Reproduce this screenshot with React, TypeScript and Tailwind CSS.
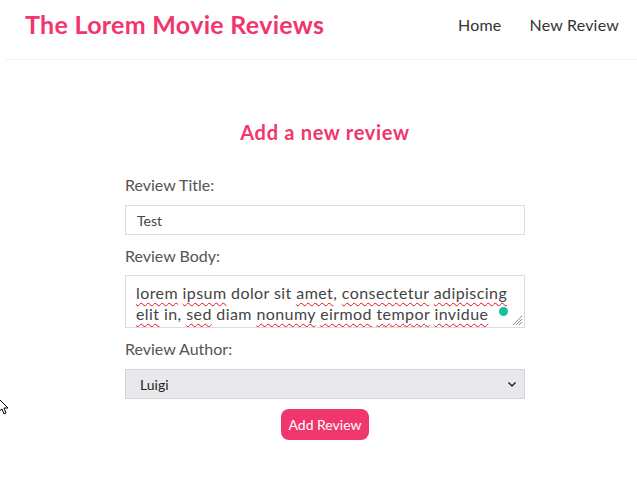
import React from "react";

const Wavy = ({ children }: { children: React.ReactNode }) => (
  <span className="underline decoration-wavy decoration-[#e5121b] decoration-1 underline-offset-[3px]">{children}</span>
);

export default function App() {
  return (
    <div className="relative w-[650px] h-[479px] bg-white overflow-hidden text-[#333]" style={{ fontFamily: "Lato, 'Open Sans', sans-serif" }}>
      <nav className="ml-[5px] w-[640px] h-[60px] px-5 border-b border-[#f2f2f2]">
        <div className="h-[49px] flex items-center justify-between">
          <h1 className="text-[25px] font-bold text-[#f1356d] leading-none tracking-[0.3px]">The Lorem Movie Reviews</h1>
          <div className="flex items-center text-[16px] text-[#333] tracking-[0.2px]">
            <span className="ml-4 p-[6px]">Home</span>
            <span className="ml-4 p-[6px]">New Review</span>
          </div>
        </div>
      </nav>
      <div className="w-[400px] mx-auto mt-[60px] flex flex-col">
        <h2 className="text-center text-[20px] font-bold text-[#f1356d] leading-[24px] tracking-[0.7px]">Add a new review</h2>
        <label className="mt-[30px] text-[16px] leading-[21px] text-[#555]">Review Title:</label>
        <div className="mt-[10px] h-[30px] border border-[#ddd] px-[11px] flex items-center text-[14px] text-[#444]">Test</div>
        <label className="mt-[10px] text-[16px] leading-[21px] text-[#555]">Review Body:</label>
        <div className="relative mt-[9px] h-[53px] border border-[#ddd] overflow-hidden">
          <div className="pl-[10px] pt-[6px] text-[16px] leading-[21px] text-[#444] pr-[14px] tracking-[0.42px]">
            <Wavy>lorem</Wavy> <Wavy>ipsum</Wavy> dolor sit <Wavy>amet</Wavy>, <Wavy>consectetur</Wavy> <Wavy>adipiscing</Wavy>{" "}
            <Wavy>elit</Wavy> in, <Wavy>sed</Wavy> diam <Wavy>nonumy</Wavy> <Wavy>eirmod</Wavy> <Wavy>tempor</Wavy> <Wavy>invidue</Wavy>
            <br />
            ut labore et dolore magna <Wavy>aliquyam</Wavy> erat, sed diam
          </div>
          <div className="absolute right-[16px] top-[31px] w-[9px] h-[9px] rounded-full bg-[#15c39a]" />
          <svg className="absolute right-[1px] bottom-[1px]" width="12" height="12" viewBox="0 0 12 12">
            <line x1="11" y1="2" x2="2" y2="11" stroke="#888" strokeWidth="1" />
            <line x1="11" y1="5" x2="5" y2="11" stroke="#888" strokeWidth="1" />
            <line x1="11" y1="8" x2="8" y2="11" stroke="#888" strokeWidth="1" />
          </svg>
        </div>
        <label className="mt-[10px] text-[16px] leading-[21px] text-[#555]">Review Author:</label>
        <div className="mt-[10px] h-[30px] border border-[#d5d5d8] bg-[#e9e8ed] pl-[14px] pr-[7px] flex items-center justify-between text-[14px] text-[#222]">
          <span>Luigi</span>
          <svg width="10" height="10" viewBox="0 0 10 10">
            <path d="M1.5 3.5 L5 7 L8.5 3.5" fill="none" stroke="#222" strokeWidth="1.5" />
          </svg>
        </div>
        <div className="mt-[10px] flex justify-center">
          <div className="bg-[#f1356d] text-white rounded-lg h-[31px] w-[88px] flex items-center justify-center text-[14px]">Add Review</div>
        </div>
      </div>
      <svg className="absolute left-0 top-[397px]" width="10" height="20" viewBox="0 0 10 20">
        <path d="M-2 1 L8 11 L4 11 L6 16 L4 17 L2 12 L-2 15 Z" fill="#fff" stroke="#000" strokeWidth="1" />
      </svg>
    </div>
  );
}
